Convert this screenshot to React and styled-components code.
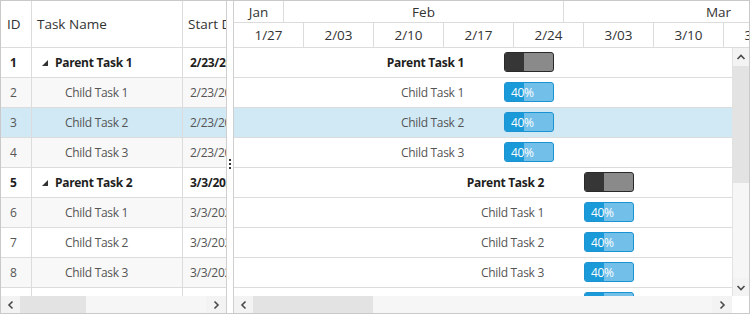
import React from "react"
import styled, { createGlobalStyle } from "styled-components"

const GlobalStyle = createGlobalStyle`
  body {
    margin: 0;
    font-family: "Open Sans", "Noto Sans", sans-serif;
    background: #fff;
  }
  * { box-sizing: border-box; }
`

const DAY = 10
const LINE = "#dcdcdc"

const Frame = styled.div`
  width: 750px;
  height: 314px;
  border: 1px solid #c9c9c9;
  display: flex;
  overflow: hidden;
  background: #fff;
`

const GridPane = styled.div`
  width: 225px;
  display: flex;
  flex-direction: column;
  overflow: hidden;
`

const GridRowBase = styled.div`
  display: grid;
  grid-template-columns: 31px 151px 1fr;
  border-bottom: 1px solid ${LINE};
`

const GridHeader = styled(GridRowBase)`
  height: 47px;
  color: #333;
  font-size: 13.5px;
`

const HeaderCell = styled.div`
  display: flex;
  align-items: center;
  padding-left: ${(p) => p.$pad || 5}px;
  border-right: ${(p) => (p.$last ? "none" : `1px solid ${LINE}`)};
  white-space: nowrap;
  overflow: hidden;
`

const GridBody = styled.div`
  flex: 1;
  overflow: hidden;
`

const GridRow = styled(GridRowBase)`
  height: 30px;
  font-size: 12px;
  letter-spacing: -0.3px;
  background: ${(p) => (p.$selected ? "#d0e9f5" : p.$alt ? "#f8f8f8" : "#fff")};
  color: ${(p) => (p.$parent ? "#1e1e1e" : "#555")};
  font-weight: ${(p) => (p.$parent ? 700 : 400)};
`

const Cell = styled.div`
  display: flex;
  align-items: center;
  padding-left: ${(p) => p.$pad || 7}px;
  border-right: ${(p) => (p.$last ? "none" : `1px solid ${LINE}`)};
  white-space: nowrap;
  overflow: hidden;
`

const Expander = styled.svg`
  width: 6px;
  height: 6px;
  margin-right: 7px;
  flex-shrink: 0;
`

const Splitter = styled.div`
  width: 8px;
  border-left: 1px solid #cfcfcf;
  border-right: 1px solid #cfcfcf;
  background: #fff;
  display: flex;
  flex-direction: column;
  align-items: center;
  justify-content: center;
  gap: 2px;
  padding-top: 14px;
`

const Dot = styled.span`
  width: 2px;
  height: 2px;
  background: #333;
`

const ChartPane = styled.div`
  flex: 1;
  display: flex;
  flex-direction: column;
  overflow: hidden;
`

const Tier = styled.div`
  display: flex;
  height: ${(p) => p.$h}px;
  border-bottom: 1px solid ${LINE};
  overflow: hidden;
  color: #333;
  font-size: 13.5px;
`

const TierCell = styled.div`
  flex: 0 0 ${(p) => p.$w}px;
  display: flex;
  align-items: center;
  justify-content: center;
  border-right: 1px solid ${LINE};
  white-space: nowrap;
`

const ChartMiddle = styled.div`
  flex: 1;
  display: flex;
  overflow: hidden;
`

const ChartBody = styled.div`
  flex: 1;
  overflow: hidden;
`

const ChartRow = styled.div`
  position: relative;
  height: 30px;
  border-bottom: 1px solid ${LINE};
  background: ${(p) => (p.$selected ? "#d0e9f5" : "#fff")};
`

const BarWrap = styled.div`
  position: absolute;
  top: 4px;
  height: 20px;
  width: ${(p) => p.$w}px;
`

const Bar = styled.div`
  position: relative;
  height: 100%;
  border-radius: 3px;
  overflow: hidden;
  border: 1px solid ${(p) => (p.$parent ? "#2a2a2a" : "#1b93d1")};
  background: ${(p) => (p.$parent ? "#8a8a8a" : "#72c0e9")};
  display: flex;
  align-items: center;
`

const Progress = styled.div`
  position: absolute;
  left: 0;
  top: 0;
  bottom: 0;
  background: ${(p) => (p.$parent ? "#363636" : "#1a9ad8")};
`

const BarText = styled.span`
  position: relative;
  color: #fff;
  font-size: 12px;
  letter-spacing: -0.3px;
  padding-left: 6px;
`

const BarLabel = styled.span`
  position: absolute;
  right: calc(100% + 40px);
  top: 0;
  height: 100%;
  display: flex;
  align-items: center;
  white-space: nowrap;
  font-size: 12px;
  letter-spacing: -0.3px;
  color: ${(p) => (p.$parent ? "#1e1e1e" : "#555")};
  font-weight: ${(p) => (p.$parent ? 700 : 400)};
`

const VScroll = styled.div`
  width: 17px;
  border-left: 1px solid #e2e2e2;
  background: #f6f6f6;
  display: flex;
  flex-direction: column;
`

const HScroll = styled.div`
  height: 17px;
  display: flex;
  background: #f6f6f6;
  flex: ${(p) => (p.$grow ? 1 : "none")};
`

const ScrollRow = styled.div`
  display: flex;
  height: 17px;
`

const Corner = styled.div`
  width: 17px;
  background: #fff;
`

const ArrowBtn = styled.div`
  flex: 0 0 ${(p) => p.$size || 19}px;
  display: flex;
  align-items: center;
  justify-content: center;
  background: #f3f3f3;
`

const Thumb = styled.div`
  flex: 0 0 ${(p) => p.$size}px;
  background: #e3e3e3;
`

const Track = styled.div`
  flex: 1;
`

const Chevron = ({ dir }) => {
  const paths = {
    left: "M5.5 1.5 L2 5 L5.5 8.5",
    right: "M2.5 1.5 L6 5 L2.5 8.5",
    up: "M1.5 6 L5 2.5 L8.5 6",
    down: "M1.5 3 L5 6.5 L8.5 3",
  }
  const horiz = dir === "left" || dir === "right"
  return (
    <svg width={horiz ? 8 : 10} height={horiz ? 10 : 9} viewBox={horiz ? "0 0 8 10" : "0 0 10 9"}>
      <path d={paths[dir]} fill="none" stroke="#4a4a4a" strokeWidth="1.6" />
    </svg>
  )
}

const months = [
  { label: "Jan", days: 5 },
  { label: "Feb", days: 28 },
  { label: "Mar", days: 31 },
]

const weeks = ["1/27", "2/03", "2/10", "2/17", "2/24", "3/03", "3/10", "3/17", "3/24"]

const tasks = [
  { id: 1, name: "Parent Task 1", start: "2/23/2025", offset: 27, parent: true },
  { id: 2, name: "Child Task 1", start: "2/23/2025", offset: 27 },
  { id: 3, name: "Child Task 2", start: "2/23/2025", offset: 27 },
  { id: 4, name: "Child Task 3", start: "2/23/2025", offset: 27 },
  { id: 5, name: "Parent Task 2", start: "3/3/2025", offset: 35, parent: true },
  { id: 6, name: "Child Task 1", start: "3/3/2025", offset: 35 },
  { id: 7, name: "Child Task 2", start: "3/3/2025", offset: 35 },
  { id: 8, name: "Child Task 3", start: "3/3/2025", offset: 35 },
  { id: 9, name: "Child Task 4", start: "3/3/2025", offset: 35 },
]

const SELECTED = 3

const App = () => {
  return (
    <>
      <GlobalStyle />
      <Frame>
        <GridPane>
          <GridHeader>
            <HeaderCell $pad={6}>ID</HeaderCell>
            <HeaderCell>Task Name</HeaderCell>
            <HeaderCell $last>Start Date</HeaderCell>
          </GridHeader>
          <GridBody>
            {tasks.map((t) => (
              <GridRow
                key={t.id}
                $parent={t.parent}
                $alt={!t.parent && t.id % 2 === 0}
                $selected={t.id === SELECTED}
              >
                <Cell $pad={9}>{t.id}</Cell>
                <Cell $pad={t.parent ? 10 : 33}>
                  {t.parent && (
                    <Expander viewBox="0 0 6 6">
                      <polygon points="0,6 6,6 6,0" fill="#333" />
                    </Expander>
                  )}
                  {t.name}
                </Cell>
                <Cell $last>{t.start}</Cell>
              </GridRow>
            ))}
          </GridBody>
          <HScroll>
            <ArrowBtn>
              <Chevron dir="left" />
            </ArrowBtn>
            <Thumb $size={66} />
            <Track />
            <ArrowBtn $size={20}>
              <Chevron dir="right" />
            </ArrowBtn>
          </HScroll>
        </GridPane>

        <Splitter>
          <Dot />
          <Dot />
          <Dot />
        </Splitter>

        <ChartPane>
          <Tier $h={22}>
            {months.map((m) => (
              <TierCell key={m.label} $w={m.days * DAY}>
                {m.label}
              </TierCell>
            ))}
          </Tier>
          <Tier $h={25}>
            {weeks.map((w) => (
              <TierCell key={w} $w={7 * DAY}>
                {w}
              </TierCell>
            ))}
          </Tier>
          <ChartMiddle>
            <ChartBody>
              {tasks.map((t) => (
                <ChartRow key={t.id} $selected={t.id === SELECTED}>
                  <BarWrap $w={5 * DAY} style={{ left: t.offset * DAY }}>
                    <BarLabel $parent={t.parent}>{t.name}</BarLabel>
                    <Bar $parent={t.parent}>
                      <Progress $parent={t.parent} style={{ width: "40%" }} />
                      {!t.parent && <BarText>40%</BarText>}
                    </Bar>
                  </BarWrap>
                </ChartRow>
              ))}
            </ChartBody>
            <VScroll>
              <ArrowBtn $size={18}>
                <Chevron dir="up" />
              </ArrowBtn>
              <Thumb $size={117} />
              <Track />
              <ArrowBtn $size={18}>
                <Chevron dir="down" />
              </ArrowBtn>
            </VScroll>
          </ChartMiddle>
          <ScrollRow>
            <HScroll $grow>
              <ArrowBtn>
                <Chevron dir="left" />
              </ArrowBtn>
              <Thumb $size={120} />
              <Track />
              <ArrowBtn $size={20}>
                <Chevron dir="right" />
              </ArrowBtn>
            </HScroll>
            <Corner />
          </ScrollRow>
        </ChartPane>
      </Frame>
    </>
  )
}

export default App
